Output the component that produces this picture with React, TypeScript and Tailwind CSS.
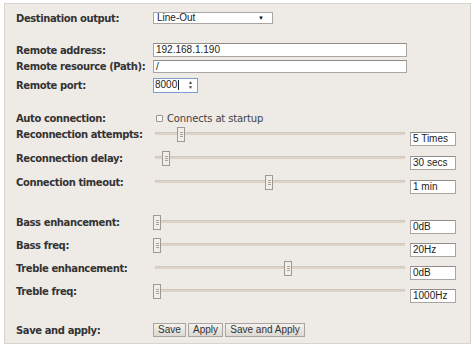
import React from 'react';

const labelCls = "w-[137px] shrink-0 h-[16px] flex items-center whitespace-nowrap font-['DejaVu_Sans',sans-serif] font-bold text-[10px] tracking-[-0.4px] text-[#333]";
const inputCls = "bg-white border border-[#a8a5a2] border-t-[#8f8c89] font-['Liberation_Sans',Arial,sans-serif] text-[10px] text-[#222] flex items-center pl-[2px] leading-none";

const Thumb: React.FC<{ left: number }> = ({ left }) => (
  <div
    className="absolute top-[0.5px] w-[8px] h-[15px] bg-[#f1eeea] border border-[#9d9892] flex flex-col items-center justify-center gap-[1px]"
    style={{ left }}
  >
    <div className="w-[3px] h-px bg-[#a8a39d]" />
    <div className="w-[3px] h-px bg-[#a8a39d]" />
    <div className="w-[3px] h-px bg-[#a8a39d]" />
  </div>
);

interface SliderRowProps {
  label: string;
  thumb: number;
  value: string;
  height: number;
}

const SliderRow: React.FC<SliderRowProps> = ({ label, thumb, value, height }) => (
  <div className="flex items-start" style={{ height }}>
    <div className={labelCls}>{label}</div>
    <div className="relative w-[257px] h-[16px] shrink-0">
      <div className="absolute left-[2px] top-[6px] w-[250px] h-[3px] bg-[#ddd3c9] border-t border-[#d3c9be]" />
      <Thumb left={thumb} />
    </div>
    <div className={`${inputCls} mt-[6px] w-[46px] h-[14px]`}>{value}</div>
  </div>
);

const Button: React.FC<{ children: React.ReactNode; w: string }> = ({ children, w }) => (
  <button
    className={`${w} h-[14px] flex items-center justify-center bg-gradient-to-b from-[#f4f2ef] to-[#dcd8d3] border border-[#a9a5a0] font-['Liberation_Sans',Arial,sans-serif] text-[10px] text-[#333] leading-none`}
  >
    {children}
  </button>
);

export default function App() {
  return (
    <div className="w-[474px] h-[349px] bg-white pt-[3px] pl-[4px]">
      <div className="w-[467px] h-[341px] border border-[#d8d4d0] bg-[#eeeae6] pl-[11px] pt-[6px]">
        {/* destination */}
        <div className="flex items-center h-[16px]">
          <div className={labelCls}>Destination output:</div>
          <div className="w-[120px] h-[12px] bg-white border border-[#a8a5a2] flex items-center justify-between pl-[3px] pr-[8px] font-['Liberation_Sans',Arial,sans-serif] text-[10px] text-[#222] leading-none">
            <span>Line-Out</span>
            <span className="text-[6px] text-[#111]">▼</span>
          </div>
        </div>

        {/* remote */}
        <div className="flex items-center h-[16px] mt-[16px]">
          <div className={labelCls}>Remote address:</div>
          <div className={`${inputCls} w-[254px] h-[14px]`}>192.168.1.190</div>
        </div>
        <div className="flex items-center h-[17px]">
          <div className={labelCls}>Remote resource (Path):</div>
          <div className={`${inputCls} w-[254px] h-[13px]`}>/</div>
        </div>
        <div className="flex items-center h-[16px] mt-[2px]">
          <div className={labelCls}>Remote port:</div>
          <div className="w-[45px] h-[15px] bg-white border border-[#7f9ccf] flex items-center justify-between pl-[1px] pr-[4px] font-['Liberation_Sans',Arial,sans-serif] text-[10px] text-[#222] leading-none">
            <span className="flex items-center">
              8000<span className="ml-px w-px h-[10px] bg-[#222]" />
            </span>
            <span className="flex flex-col items-center text-[5px] leading-[5px] text-[#444]">
              <span>▲</span>
              <span>▼</span>
            </span>
          </div>
        </div>

        {/* auto connection */}
        <div className="flex items-center h-[16px] mt-[17px]">
          <div className={labelCls}>Auto connection:</div>
          <div className="flex items-center ml-[3px]">
            <div className="w-[7px] h-[7px] rounded-[1px] border border-[#9a9692] bg-[#f7f5f3]" />
            <span className="ml-[4px] font-['DejaVu_Sans',sans-serif] text-[10px] tracking-[-0.15px] text-[#444]">Connects at startup</span>
          </div>
        </div>

        <SliderRow label="Reconnection attempts:" thumb={24} value="5 Times" height={24} />
        <SliderRow label="Reconnection delay:" thumb={9} value="30 secs" height={24} />
        <SliderRow label="Connection timeout:" thumb={112} value="1 min" height={24} />

        <div className="mt-[16px]">
          <SliderRow label="Bass enhancement:" thumb={0} value="0dB" height={23} />
          <SliderRow label="Bass freq:" thumb={0} value="20Hz" height={23} />
          <SliderRow label="Treble enhancement:" thumb={131} value="0dB" height={23} />
          <SliderRow label="Treble freq:" thumb={0} value="1000Hz" height={23} />
        </div>

        {/* save */}
        <div className="flex items-center h-[16px] mt-[16px]">
          <div className={labelCls}>Save and apply:</div>
          <div className="flex gap-[2px]">
            <Button w="w-[33px]">Save</Button>
            <Button w="w-[35px]">Apply</Button>
            <Button w="w-[80px]">Save and Apply</Button>
          </div>
        </div>
      </div>
    </div>
  );
}
